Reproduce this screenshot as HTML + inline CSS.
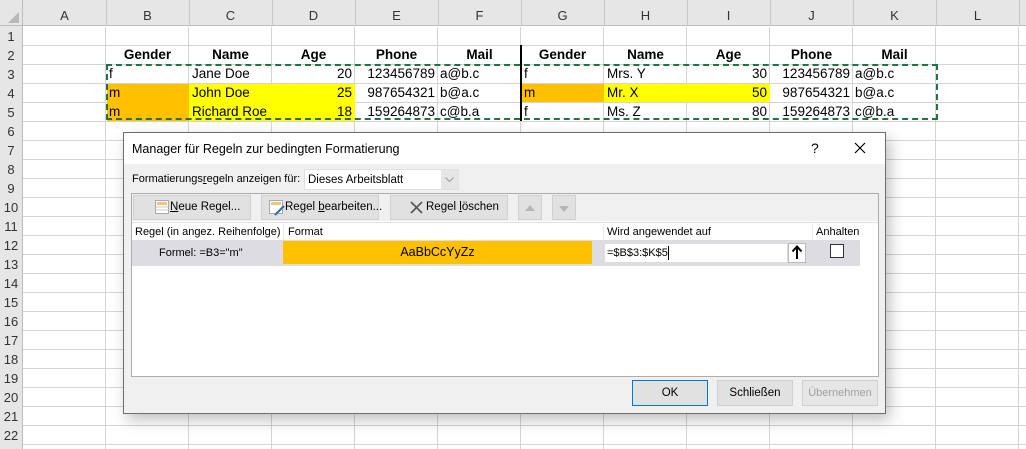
<!DOCTYPE html>
<html><head><meta charset="utf-8"><style>
*{margin:0;padding:0;box-sizing:border-box}
body{width:1026px;height:449px;overflow:hidden;background:#fff;font-family:"Liberation Sans",sans-serif;position:relative}
.a{position:absolute}
.grid{left:23px;top:27px;width:1003px;height:422px;
background-image:repeating-linear-gradient(to right,transparent 0 82px,#d4d4d4 82px 83px),repeating-linear-gradient(to bottom,transparent 0 18px,#d4d4d4 18px 19px);}
.ch{top:0;height:26px;background:#e6e6e6;border-bottom:1px solid #bdbdbd;left:0;width:1026px}
.chl{top:6px;font-size:13px;color:#333;text-align:center;width:83px;line-height:20px}
.rh{left:0;width:23px;top:26px;height:423px;background:#e6e6e6;border-right:1px solid #bdbdbd}
.rl{left:0;width:22px;text-align:center;font-size:13px;color:#333;line-height:19px}
.c{font-size:13.5px;line-height:19px;color:#000;white-space:nowrap}
.b{font-weight:bold;text-align:center;width:83px}
.r{text-align:right;width:80px}
.dlg{left:123px;top:132px;width:763px;height:282px;background:#f0f0f0;border:1px solid #6e6e6e;box-shadow:4px 6px 14px rgba(0,0,0,.25);font-size:11px;color:#000;white-space:nowrap}
.btn{background:#e1e1e1;border:1px solid #d0d0d0;text-align:center;line-height:24px;font-size:11.5px}
</style></head><body>
<div class="a ch"></div>
<div class="a" style="left:0;top:0;width:23px;height:26px;background:#e6e6e6;border-right:1px solid #bdbdbd;border-bottom:1px solid #bdbdbd"></div>
<svg class="a" style="left:8px;top:12px" width="12" height="12"><polygon points="11,0 11,11 0,11" fill="#b8b8b8"/></svg>
<div class="a rh"></div>
<div class="a grid"></div>
<div class="a chl" style="left:23px">A</div><div class="a chl" style="left:106px">B</div><div class="a chl" style="left:189px">C</div><div class="a chl" style="left:272px">D</div><div class="a chl" style="left:355px">E</div><div class="a chl" style="left:438px">F</div><div class="a chl" style="left:521px">G</div><div class="a chl" style="left:604px">H</div><div class="a chl" style="left:687px">I</div><div class="a chl" style="left:770px">J</div><div class="a chl" style="left:853px">K</div><div class="a chl" style="left:936px">L</div>
<div class="a" style="left:106px;top:0;width:1px;height:26px;background:#c8c8c8;box-shadow:83px 0 #c8c8c8,166px 0 #c8c8c8,249px 0 #c8c8c8,332px 0 #c8c8c8,415px 0 #c8c8c8,498px 0 #c8c8c8,581px 0 #c8c8c8,664px 0 #c8c8c8,747px 0 #c8c8c8,830px 0 #c8c8c8,913px 0 #c8c8c8"></div>
<div class="a" style="left:0;top:27px">
<div class="rl">1</div><div class="rl">2</div><div class="rl">3</div><div class="rl">4</div><div class="rl">5</div><div class="rl">6</div><div class="rl">7</div><div class="rl">8</div><div class="rl">9</div><div class="rl">10</div><div class="rl">11</div><div class="rl">12</div><div class="rl">13</div><div class="rl">14</div><div class="rl">15</div><div class="rl">16</div><div class="rl">17</div><div class="rl">18</div><div class="rl">19</div><div class="rl">20</div><div class="rl">21</div><div class="rl">22</div>
</div>
<div class="a" style="left:107px;top:84px;width:82px;height:37px;background:#ffc000"></div>
<div class="a" style="left:189px;top:84px;width:166px;height:37px;background:#ffff00"></div>
<div class="a" style="left:522px;top:84px;width:82px;height:18px;background:#ffc000"></div>
<div class="a" style="left:604px;top:84px;width:166px;height:18px;background:#ffff00"></div>
<div class="a" style="left:520px;top:45px;width:2px;height:76px;background:#000"></div>
<div class="a" style="left:106px;top:64px;width:832px;height:56px;border:2px dashed #217346"></div>
<div class="a c b" style="left:106px;top:45px">Gender</div><div class="a c b" style="left:189px;top:45px">Name</div><div class="a c b" style="left:272px;top:45px">Age</div><div class="a c b" style="left:355px;top:45px">Phone</div><div class="a c b" style="left:438px;top:45px">Mail</div>
<div class="a c b" style="left:521px;top:45px">Gender</div><div class="a c b" style="left:604px;top:45px">Name</div><div class="a c b" style="left:687px;top:45px">Age</div><div class="a c b" style="left:770px;top:45px">Phone</div><div class="a c b" style="left:853px;top:45px">Mail</div>
<div class="a c" style="left:109px;top:64px">f</div><div class="a c" style="left:192px;top:64px">Jane Doe</div><div class="a c r" style="left:272px;top:64px">20</div><div class="a c r" style="left:355px;top:64px">123456789</div><div class="a c" style="left:440px;top:64px">a@b.c</div>
<div class="a c" style="left:109px;top:83px">m</div><div class="a c" style="left:192px;top:83px">John Doe</div><div class="a c r" style="left:272px;top:83px">25</div><div class="a c r" style="left:355px;top:83px">987654321</div><div class="a c" style="left:440px;top:83px">b@a.c</div>
<div class="a c" style="left:109px;top:102px">m</div><div class="a c" style="left:192px;top:102px">Richard Roe</div><div class="a c r" style="left:272px;top:102px">18</div><div class="a c r" style="left:355px;top:102px">159264873</div><div class="a c" style="left:440px;top:102px">c@b.a</div>
<div class="a c" style="left:524px;top:64px">f</div><div class="a c" style="left:607px;top:64px">Mrs. Y</div><div class="a c r" style="left:687px;top:64px">30</div><div class="a c r" style="left:770px;top:64px">123456789</div><div class="a c" style="left:855px;top:64px">a@b.c</div>
<div class="a c" style="left:524px;top:83px">m</div><div class="a c" style="left:607px;top:83px">Mr. X</div><div class="a c r" style="left:687px;top:83px">50</div><div class="a c r" style="left:770px;top:83px">987654321</div><div class="a c" style="left:855px;top:83px">b@a.c</div>
<div class="a c" style="left:524px;top:102px">f</div><div class="a c" style="left:607px;top:102px">Ms. Z</div><div class="a c r" style="left:687px;top:102px">80</div><div class="a c r" style="left:770px;top:102px">159264873</div><div class="a c" style="left:855px;top:102px">c@b.a</div>

<div class="a dlg">
 <div class="a" style="left:0;top:0;width:761px;height:31px;background:#fff"></div>
 <div class="a" style="left:8px;top:9px;font-size:12.5px">Manager für Regeln zur bedingten Formatierung</div>
 <div class="a" style="left:687px;top:7px;font-size:14px">?</div>
 <svg class="a" style="left:730px;top:9px" width="12" height="12"><path d="M1 1L11 11M11 1L1 11" stroke="#000" stroke-width="1.2"/></svg>
 <div class="a" style="left:8px;top:40px">Formatierungs<u>r</u>egeln anzeigen für:</div>
 <div class="a" style="left:180px;top:36px;width:155px;height:21px;background:#fff;border:1px solid #e0e0e0"><span class="a" style="left:3px;top:4px;font-size:11.5px">Dieses Arbeitsblatt</span>
  <div class="a" style="right:0;top:0;width:17px;height:19px;background:#e6e6e6"></div>
  <svg class="a" style="right:4px;top:7px" width="9" height="6"><path d="M0.5 0.5L4.5 4.5L8.5 0.5" stroke="#999" fill="none"/></svg></div>
 <div class="a" style="left:7px;top:60px;width:748px;height:184px;background:#fff;border:1px solid #adadad"></div>
 <div class="a" style="left:8px;top:61px;width:746px;height:27px;background:#f0f0f0"></div>
 <div class="a btn" style="left:9px;top:62px;width:118px;height:25px"></div>
 <span class="a" style="left:46px;top:68px;font-size:11.5px"><u>N</u>eue Regel...</span>
 <svg class="a" style="left:31px;top:67px" width="14" height="14"><rect x=".5" y=".5" width="13" height="13" fill="#fff" stroke="#aaa"/><rect x="2" y="2" width="10" height="3" fill="#f3c37b"/><path d="M1 7H13M1 10H13" stroke="#ccc"/></svg>
 <div class="a btn" style="left:137px;top:62px;width:118px;height:25px"></div>
 <span class="a" style="left:161px;top:68px;font-size:11.5px">Regel <u>b</u>earbeiten...</span>
 <svg class="a" style="left:145px;top:67px" width="16" height="16"><rect x=".5" y=".5" width="13" height="13" fill="#fff" stroke="#aaa"/><rect x="2" y="2" width="10" height="3" fill="#f3c37b"/><path d="M6 15L15 6" stroke="#2a6ebb" stroke-width="2"/></svg>
 <div class="a btn" style="left:266px;top:62px;width:118px;height:25px"></div>
 <span class="a" style="left:302px;top:68px;font-size:11.5px">Regel <u>l</u>öschen</span>
 <svg class="a" style="left:286px;top:68px" width="13" height="13"><path d="M1 1L12 12M12 1L1 12" stroke="#555" stroke-width="1.6"/></svg>
 <div class="a btn" style="left:394px;top:62px;width:24px;height:25px"></div>
 <svg class="a" style="left:401px;top:72px" width="10" height="6"><path d="M0 6L5 0L10 6Z" fill="#b5b5b5"/></svg>
 <div class="a btn" style="left:428px;top:62px;width:24px;height:25px"></div>
 <svg class="a" style="left:435px;top:73px" width="10" height="6"><path d="M0 0L5 6L10 0Z" fill="#b5b5b5"/></svg>
 <div class="a" style="left:8px;top:89px;width:746px;height:1px;background:#e0e0e0"></div>
 <div class="a" style="left:11px;top:93px">Regel (in angez. Reihenfolge)</div>
 <div class="a" style="left:159px;top:89px;width:1px;height:18px;background:#e8e8e8"></div>
 <div class="a" style="left:164px;top:93px">Format</div>
 <div class="a" style="left:479px;top:89px;width:1px;height:18px;background:#e8e8e8"></div>
 <div class="a" style="left:483px;top:93px">Wird angewendet auf</div>
 <div class="a" style="left:688px;top:89px;width:1px;height:18px;background:#e8e8e8"></div>
 <div class="a" style="left:692px;top:93px">Anhalten</div>
 <div class="a" style="left:8px;top:107px;width:728px;height:26px;background:#dcdce2"></div>
 <div class="a" style="left:35px;top:114px">Formel: =B3="m"</div>
 <div class="a" style="left:159px;top:108px;width:309px;height:23px;background:#ffc000;text-align:center;line-height:23px;font-size:12.5px">AaBbCcYyZz</div>
 <div class="a" style="left:480px;top:110px;width:184px;height:20px;background:#fff;border:1px solid #ddd"><span class="a" style="left:2px;top:3px">=$B$3:$K$5</span><span class="a" style="left:63px;top:2px;width:1px;height:14px;background:#000"></span></div>
 <div class="a" style="left:664px;top:110px;width:18px;height:20px;background:#fff;border:1px solid #bbb"></div>
 <svg class="a" style="left:667px;top:112px" width="12" height="15"><path d="M6 14V2M1.5 6.5L6 1.5L10.5 6.5" stroke="#000" stroke-width="2" fill="none"/></svg>
 <div class="a" style="left:706px;top:111px;width:14px;height:14px;background:#fff;border:1px solid #333"></div>
 <div class="a btn" style="left:508px;top:247px;width:76px;height:26px;border:1px solid #0078d7">OK</div>
 <div class="a btn" style="left:593px;top:247px;width:76px;height:26px">Schließen</div>
 <div class="a btn" style="left:678px;top:247px;width:76px;height:26px;color:#a0a0a0;background:#e6e6e6;font-size:11px">Übernehmen</div>
</div>
</body></html>
